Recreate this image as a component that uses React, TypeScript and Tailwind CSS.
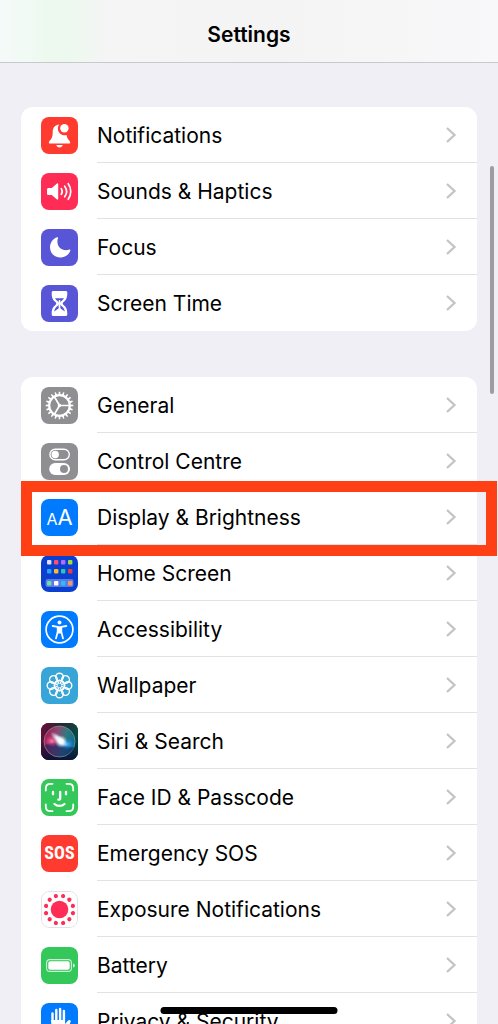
import type { ReactNode } from 'react';

interface SettingsItem {
  label: string;
  tile: string;
  icon: ReactNode;
  highlighted?: boolean;
}

function Glyph({ children }: { children: ReactNode }) {
  return (
    <svg viewBox="0 0 37 37" className="size-full" fill="none" aria-hidden="true">
      {children}
    </svg>
  );
}

function BellIcon() {
  return (
    <Glyph>
      <path
        d="M18.2 7.6c-4.2.3-6.4 3.3-6.5 7.3-.1 4.9-.9 6.6-2.7 8.4-.8.8-1.2 1.5-1.2 2.2 0 .6.5 1 1.2 1h19c.7 0 1.2-.4 1.2-1 0-.7-.4-1.4-1.2-2.2-1.3-1.3-2.1-3-2.4-5.3-4 1.4-8.600-1.500-8.700-6.200 0-1.600.4-3 1.300-4.200Z"
        fill="#fff"
      />
      <circle cx="23.4" cy="11.2" r="4.200" fill="#fff" />
      <path d="M15.3 27.9h6.400c-.3 1.500-1.600 2.500-3.200 2.500s-2.900-1-3.200-2.500Z" fill="#fff" />
    </Glyph>
  );
}

function SpeakerIcon() {
  return (
    <Glyph>
      <path
        d="M7.6 15h3.200l4.900-4.300c.8-.7 1.500-.4 1.500.6v14.400c0 1-.7 1.300-1.500.6L10.800 22H7.600c-1 0-1.600-.6-1.600-1.600v-3.800c0-1 .6-1.600 1.600-1.600Z"
        fill="#fff"
      />
      <path
        d="M20.300 15.600c1.200 1.800 1.200 4 0 5.800M23.700 13.200c2.300 3.200 2.300 7.400 0 10.600M27.200 10.700c3.400 4.700 3.400 10.900 0 15.600"
        stroke="#fff"
        strokeWidth="1.7"
        strokeLinecap="round"
      />
    </Glyph>
  );
}

function MoonIcon() {
  return (
    <Glyph>
      <path
        d="M16.300 8.200c.6-.2 1 .2.800.8-.5 1.100-.7 2.300-.7 3.600 0 5.200 3.500 8.600 8.700 8.600 1.200 0 2.300-.2 3.300-.6.7-.3 1.100.1.900.8-1.300 4.200-5.200 7.100-9.900 7.100C13.500 28.500 9 24 9 18.200c0-4.600 2.900-8.700 7.300-10Z"
        fill="#fff"
      />
    </Glyph>
  );
}

function HourglassIcon() {
  return (
    <Glyph>
      <path
        d="M12.300 6h12.400c1 0 1.600.6 1.600 1.500v.8c0 4.700-1.300 7-3.700 8.700-1.200.8-1.200 2.200 0 3 2.400 1.700 3.700 4 3.700 8.700v.8c0 .9-.6 1.500-1.600 1.500H12.300c-1 0-1.600-.6-1.600-1.500v-.8c0-4.700 1.300-7 3.700-8.700 1.200-.8 1.200-2.200 0-3-2.400-1.700-3.700-4-3.700-8.700v-.8c0-.9.600-1.500 1.600-1.500Z"
        fill="#fff"
      />
      <path
        d="M14 13.200h9c-.6 1.100-1.500 2-2.500 2.700-1 .8-1.300 1.700-1.300 2.600s.3 1.800 1.300 2.600c1.700 1.200 3 3.200 3.300 5.400l-4.600-3.200v-7.200h-1.400v7.200l-4.600 3.200c.3-2.200 1.600-4.200 3.300-5.400 1-.8 1.300-1.700 1.300-2.600s-.3-1.800-1.300-2.600c-1-.7-1.900-1.600-2.500-2.700Z"
        fill="#5856d6"
      />
      <path d="M18.500 15v9" stroke="#fff" strokeWidth="1.4" />
    </Glyph>
  );
}

const GEAR_TEETH = Array.from({ length: 20 }, (_, i) => i * 18);

function GearIcon() {
  return (
    <Glyph>
      <circle cx="18.5" cy="18.5" r="10.3" stroke="#fff" strokeWidth="2.2" />
      {GEAR_TEETH.map((angle) => (
        <path
          key={angle}
          d="M17.500 8.200l.3-3.500h1.400l.3 3.500Z"
          fill="#fff"
          transform={`rotate(${angle} 18.5 18.5)`}
        />
      ))}
      <path d="M18.500 18.500H28M18.500 18.500l-5-8.700M18.500 18.500l-5 8.700" stroke="#fff" strokeWidth="1.7" />
      <circle cx="18.5" cy="18.5" r="1.7" fill="#fff" />
    </Glyph>
  );
}

function TogglesIcon() {
  return (
    <Glyph>
      <rect x="8.9" y="6.2" width="19.4" height="10.6" rx="5.3" stroke="#fff" strokeWidth="1.4" />
      <circle cx="14.2" cy="11.5" r="3.7" fill="#fff" />
      <rect x="8.2" y="20" width="20.8" height="12" rx="6" fill="#fff" />
      <circle cx="23" cy="26" r="4" fill="#8e8e93" />
    </Glyph>
  );
}

function TextSizeIcon() {
  return (
    <span className="flex size-full items-baseline justify-center pt-1 text-white">
      <span className="text-base leading-7">A</span>
      <span className="text-[22px] leading-7">A</span>
    </span>
  );
}

const APP_COLORS = [
  ['#e3e0f5', '#ff4f6d', '#b56bff', '#a6dc3c'],
  ['#22a7f5', '#f5bd28', '#28c8b4', '#f03a3e'],
  ['#6fe0a0', '#ffffff', '#2bc0ee', '#f7995c'],
];

function HomeScreenIcon() {
  return (
    <Glyph>
      <rect x="4.5" y="24" width="28" height="8" rx="2" fill="#5b7be6" />
      {APP_COLORS.map((row, r) =>
        row.map((color, c) => (
          <rect key={color} x={6 + c * 7} y={[5, 14, 26][r]} width="4.4" height="4.4" rx="1" fill={color} />
        )),
      )}
    </Glyph>
  );
}

function AccessibilityIcon() {
  return (
    <Glyph>
      <circle cx="18.5" cy="18.5" r="13.4" stroke="#fff" strokeWidth="1.7" />
      <circle cx="18.5" cy="11.5" r="2" fill="#fff" />
      <path
        d="M11.700 15l5 .8v5l-1.700 6.600M25.300 15l-5 .8v5l1.700 6.600"
        stroke="#fff"
        strokeWidth="1.8"
        strokeLinecap="round"
        strokeLinejoin="round"
      />
      <path d="M16.200 15.200h4.600v5.800l-.8 1.400h-3l-.8-1.400Z" fill="#fff" />
    </Glyph>
  );
}

function FlowerIcon() {
  return (
    <Glyph>
      {[0, 45, 90, 135, 180, 225, 270, 315].map((angle) => (
        <circle
          key={angle}
          cx="18.5"
          cy="10"
          r="3.800"
          stroke="#fff"
          strokeWidth="1.4"
          transform={`rotate(${angle} 18.5 18.5)`}
        />
      ))}
      {[0, 45, 90, 135, 180, 225, 270, 315].map((angle) => (
        <circle
          key={angle}
          cx="18.5"
          cy="14.6"
          r="1.700"
          stroke="#fff"
          strokeWidth="1"
          transform={`rotate(${angle} 18.5 18.5)`}
        />
      ))}
    </Glyph>
  );
}

function SiriIcon() {
  return (
    <Glyph>
      <defs>
        <linearGradient id="siri-bg" x1="0" y1="0" x2="1" y2="0.2">
          <stop offset="0" stopColor="#6e0c3c" />
          <stop offset="0.5" stopColor="#2a2430" />
          <stop offset="1" stopColor="#054a42" />
        </linearGradient>
        <linearGradient id="siri-shade" x1="0" y1="0" x2="0" y2="1">
          <stop offset="0.4" stopColor="#0a0a38" stopOpacity="0" />
          <stop offset="1" stopColor="#0a0a38" stopOpacity="0.8" />
        </linearGradient>
        <linearGradient id="siri-orb" x1="0" y1="0.3" x2="1" y2="0.5">
          <stop offset="0" stopColor="#a81654" />
          <stop offset="0.4" stopColor="#8a4a70" />
          <stop offset="0.7" stopColor="#2f7a80" />
          <stop offset="1" stopColor="#0c6a90" />
        </linearGradient>
        <radialGradient id="siri-pink">
          <stop offset="0" stopColor="#ff7fb0" />
          <stop offset="1" stopColor="#e0266e" stopOpacity="0" />
        </radialGradient>
        <radialGradient id="siri-blue">
          <stop offset="0" stopColor="#4ab8ff" />
          <stop offset="1" stopColor="#0a72e8" stopOpacity="0" />
        </radialGradient>
        <radialGradient id="siri-glow">
          <stop offset="0" stopColor="#fff" />
          <stop offset="0.35" stopColor="#fff" stopOpacity="0.85" />
          <stop offset="1" stopColor="#c8e8ff" stopOpacity="0" />
        </radialGradient>
      </defs>
      <rect width="37" height="37" fill="url(#siri-bg)" />
      <rect width="37" height="37" fill="url(#siri-shade)" />
      <circle cx="18.5" cy="18.5" r="15.500" fill="url(#siri-orb)" stroke="#8fa3a3" strokeOpacity="0.6" />
      <path d="M4 22c4-2 10-2 15-3 4 3 8 6 14 5-2 6-8 9.500-14.500 9.500S6 29 4 22Z" fill="#122060" fillOpacity="0.6" />
      <ellipse cx="11" cy="18" rx="8" ry="6" fill="url(#siri-pink)" />
      <ellipse cx="26" cy="21" rx="8" ry="6" fill="url(#siri-blue)" />
      <ellipse cx="18" cy="16.5" rx="11" ry="4" fill="url(#siri-glow)" transform="rotate(40 18 16.5)" />
      <circle cx="20" cy="18.5" r="6.500" fill="url(#siri-glow)" />
    </Glyph>
  );
}

function FaceIcon() {
  return (
    <Glyph>
      <path
        d="M4.800 11.500V9.300c0-2.800 1.700-4.500 4.500-4.500h2.200M25.500 4.800h2.200c2.800 0 4.500 1.700 4.500 4.500v2.200M32.200 25.500v2.200c0 2.800-1.700 4.500-4.500 4.500h-2.200M11.500 32.200H9.300c-2.800 0-4.500-1.700-4.500-4.500v-2.200"
        stroke="#fff"
        strokeWidth="1.8"
        strokeLinecap="round"
      />
      <path
        d="M12 12.800v2.500M25 12.800v2.500M19.200 12.800v6.400c0 1-.5 1.500-1.900 1.500M13.500 25c2.800 2.500 7.200 2.500 10 0"
        stroke="#fff"
        strokeWidth="2.300"
        strokeLinecap="round"
      />
    </Glyph>
  );
}

function SosIcon() {
  return (
    <span className="flex size-full items-center justify-center font-['Liberation_Sans_Narrow','Roboto_Condensed',Roboto,sans-serif] text-lg font-bold text-white">
      SOS
    </span>
  );
}

function ExposureIcon() {
  return (
    <Glyph>
      <rect x="0.5" y="0.5" width="36" height="36" rx="7.5" stroke="#e2e2e6" />
      <circle cx="18.5" cy="18.5" r="8.800" fill="#ff2d55" />
      {Array.from({ length: 12 }, (_, i) => (
        <circle
          key={i}
          cx="18.5"
          cy="4.6"
          r="2.100"
          fill="#ff2d55"
          transform={`rotate(${15 + i * 30} 18.5 18.5)`}
        />
      ))}
    </Glyph>
  );
}

function BatteryIcon() {
  return (
    <Glyph>
      <rect x="5.6" y="12.6" width="24.8" height="11.8" rx="3.2" stroke="#fff" strokeOpacity="0.75" strokeWidth="1.1" />
      <rect x="7.3" y="14.3" width="21.4" height="8.4" rx="1.8" fill="#fff" />
      <path d="M32 16.400c1.200.3 1.900 1.100 1.900 2.100s-.7 1.800-1.900 2.100Z" fill="#fff" fillOpacity="0.8" />
    </Glyph>
  );
}

function HandIcon() {
  return (
    <Glyph>
      <path
        d="M11.500 19v-8.500M15.300 18V7M19.100 18V6M22.900 18V8"
        stroke="#fff"
        strokeWidth="2.4"
        strokeLinecap="round"
      />
      <path
        d="M10.300 17h13.800v4l2.700-3.300c1-1.200 3.400-.8 2.800 1-1.200 3.400-3 7-5.200 9.800-1.700 2-4 3-6.600 3-4.600 0-7.500-3.300-7.500-8.500Z"
        fill="#fff"
      />
    </Glyph>
  );
}

const alertItems: SettingsItem[] = [
  { label: 'Notifications', tile: 'bg-[#ff3b30]', icon: <BellIcon /> },
  { label: 'Sounds & Haptics', tile: 'bg-[#ff2d55]', icon: <SpeakerIcon /> },
  { label: 'Focus', tile: 'bg-[#5856d6]', icon: <MoonIcon /> },
  { label: 'Screen Time', tile: 'bg-[#5856d6]', icon: <HourglassIcon /> },
];

const deviceItems: SettingsItem[] = [
  { label: 'General', tile: 'bg-[#8e8e93]', icon: <GearIcon /> },
  { label: 'Control Centre', tile: 'bg-[#8e8e93]', icon: <TogglesIcon /> },
  { label: 'Display & Brightness', tile: 'bg-[#007aff]', icon: <TextSizeIcon />, highlighted: true },
  { label: 'Home Screen', tile: 'bg-[#0a3fd0]', icon: <HomeScreenIcon /> },
  { label: 'Accessibility', tile: 'bg-[#007aff]', icon: <AccessibilityIcon /> },
  { label: 'Wallpaper', tile: 'bg-[#38a5d8]', icon: <FlowerIcon /> },
  { label: 'Siri & Search', tile: 'bg-[#20202c]', icon: <SiriIcon /> },
  { label: 'Face ID & Passcode', tile: 'bg-[#34c759]', icon: <FaceIcon /> },
  { label: 'Emergency SOS', tile: 'bg-[#ff3b30]', icon: <SosIcon /> },
  { label: 'Exposure Notifications', tile: 'bg-white', icon: <ExposureIcon /> },
  { label: 'Battery', tile: 'bg-[#34c759]', icon: <BatteryIcon /> },
  { label: 'Privacy & Security', tile: 'bg-[#007aff]', icon: <HandIcon /> },
];

function SettingsRow({ item }: { item: SettingsItem }) {
  return (
    <li className="group relative">
      <a href="#" className="flex h-14 items-center gap-[19px] pl-5">
        <span className={`size-[37px] shrink-0 overflow-hidden rounded-lg ${item.tile}`}>{item.icon}</span>
        <span className="flex h-full grow items-center justify-between border-b border-[#e2e2e5] pr-5 group-last:border-b-0">
          <span className="pt-0.5">{item.label}</span>
          <svg viewBox="0 0 12 18" className="h-[18px] w-3" fill="none" aria-hidden="true">
            <path d="M2 2l7.500 7L2 16" stroke="#c4c4c7" strokeWidth="2.3" />
          </svg>
        </span>
      </a>
      {item.highlighted && (
        <span className="pointer-events-none absolute -top-2 -right-5 -bottom-[11px] left-0 z-10 border-[11px] border-[#ff4015]" />
      )}
    </li>
  );
}

function SettingsGroup({ items }: { items: SettingsItem[] }) {
  return (
    <ul className="rounded-xl bg-white">
      {items.map((item) => (
        <SettingsRow key={item.label} item={item} />
      ))}
    </ul>
  );
}

export default function App() {
  return (
    <div className="relative flex h-screen flex-col overflow-hidden bg-[#f0eff5] font-[Inter,sans-serif] text-[21px] leading-7 text-black">
      <header className="flex h-[63px] shrink-0 items-end justify-center border-b border-[#c8c9cb] bg-[linear-gradient(90deg,#f4faf8_0%,#f1faf4_6%,#edf9ef_9%,#edf9ef_14%,#f4f5f4_21%,#f4f4f4_55%,#f8f8fa_100%)] pb-[13px]">
        <h1 className="font-semibold">Settings</h1>
      </header>

      <main className="flex min-h-0 grow flex-col gap-[46px] overflow-y-auto px-[21px] pt-11 [scrollbar-width:none]">
        <SettingsGroup items={alertItems} />
        <SettingsGroup items={deviceItems} />
      </main>

      <div className="absolute top-[166px] right-1 h-[228px] w-1 rounded-full bg-[#9c9ca1]" />
      <div className="absolute bottom-[10px] left-1/2 z-20 h-[7px] w-[177px] -translate-x-1/2 rounded-full bg-black" />
    </div>
  );
}
